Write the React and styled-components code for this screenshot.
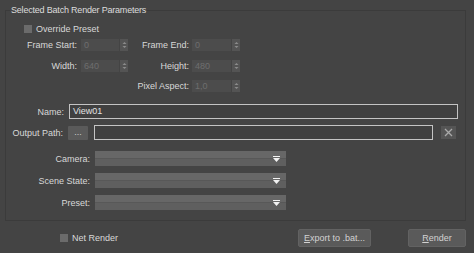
import React from 'react';
import styled, { createGlobalStyle } from 'styled-components';

const GlobalStyle = createGlobalStyle`
  html, body {
    margin: 0;
    padding: 0;
    background: #444444;
  }
  body {
    font-family: "Liberation Sans", Arial, sans-serif;
    font-size: 9px;
    color: #d8d8d8;
  }
`;

const Window = styled.div`
  width: 474px;
  height: 253px;
  box-sizing: border-box;
  padding-top: 4px;
  background: #444444;
  overflow: hidden;
`;

const Group = styled.fieldset`
  margin: 0 8px 0 5px;
  padding: 0 0 10px;
  min-width: 0;
  border: 1px solid #3b3b3b;
`;

const Legend = styled.legend`
  margin-left: 4px;
  padding: 0 1px;
  height: 12px;
  line-height: 12px;
  letter-spacing: -0.2px;
  color: #dcdcdc;
`;

const Body = styled.div`
  display: flex;
  flex-direction: column;
  padding-top: 7px;
`;

const CheckRow = styled.div`
  display: flex;
  align-items: center;
  gap: 4px;
  height: 12px;
  padding-left: ${p => p.$indent}px;
`;

const Box = styled.span`
  width: 8px;
  height: 8px;
  background: #6b6b6b;
`;

const SpinGrid = styled.div`
  display: grid;
  grid-template-columns: 75px 47px 64px 48px;
  grid-auto-rows: 12px;
  row-gap: 8.5px;
  margin-top: 4px;
  align-items: center;
`;

const SpinLabel = styled.span`
  grid-column: ${p => p.$col};
  text-align: right;
  padding-right: ${p => p.$pad}px;
`;

const Spinner = styled.div`
  display: flex;
  gap: 1px;
  height: 12px;
`;

const SpinField = styled.span`
  flex: 1;
  background: #4c4c4c;
  color: #6e6e6e;
  padding-left: 3px;
  line-height: 12px;
`;

const SpinButtons = styled.span`
  width: 8px;
  background: #545454;
  display: flex;
  align-items: center;
  justify-content: center;
`;

const Row = styled.div`
  display: flex;
  align-items: center;
  height: 15px;
  margin-top: ${p => p.$top}px;
`;

const Label = styled.span`
  width: ${p => p.$w}px;
  text-align: right;
  margin-right: 5px;
  flex-shrink: 0;
`;

const TextInput = styled.div`
  flex: 1;
  height: 15px;
  box-sizing: border-box;
  border: 1px solid #c4c4c4;
  background: #404040;
  color: #e2e2e2;
  padding-left: 3px;
  line-height: 13px;
  margin-right: ${p => p.$right}px;
`;

const SmallButton = styled.div`
  width: 20px;
  height: 14px;
  margin-right: 6px;
  background: #5a5a5a;
  border-radius: 1px;
  color: #d0d0d0;
  text-align: center;
  line-height: 12px;
`;

const ClearButton = styled.div`
  width: 15px;
  height: 13px;
  margin: 0 9px 0 8px;
  background: #555555;
  display: flex;
  align-items: center;
  justify-content: center;
`;

const Combo = styled.div`
  position: relative;
  width: 191px;
  height: 15px;
  background: linear-gradient(#676767 0, #676767 7px, #585858 7px, #585858 8px, #5f5f5f 8px);
  display: flex;
  align-items: center;
  justify-content: flex-end;
  padding-right: 6px;
  box-sizing: border-box;
`;

const BottomBar = styled.div`
  display: flex;
  align-items: center;
  margin-top: 8px;
  padding: 0 8px 0 60px;
  height: 18px;
`;

const Button = styled.div`
  width: ${p => p.$w}px;
  height: 18px;
  box-sizing: border-box;
  background: #5a5a5a;
  border: 1px solid #626262;
  border-radius: 2px;
  color: #d2d2d2;
  text-align: center;
  line-height: 16px;
  margin-left: ${p => p.$left};
`;

const U = styled.span`
  text-decoration: underline;
`;

function SpinArrows() {
  return (
    <svg width="5" height="8" viewBox="0 0 5 8">
      <polygon points="0.5,3 4.5,3 2.5,1" fill="#8c8c8c" />
      <polygon points="0.5,5 4.5,5 2.5,7" fill="#8c8c8c" />
    </svg>
  );
}

function Spin({ value }) {
  return (
    <Spinner>
      <SpinField>{value}</SpinField>
      <SpinButtons><SpinArrows /></SpinButtons>
    </Spinner>
  );
}

function ComboBox() {
  return (
    <Combo>
      <svg width="7" height="6" viewBox="0 0 7 6">
        <rect x="0" y="0" width="7" height="1" fill="#f2f2f2" />
        <polygon points="0,2 7,2 3.5,6" fill="#f2f2f2" />
      </svg>
    </Combo>
  );
}

export default function App() {
  return (
    <Window>
      <GlobalStyle />
      <Group>
        <Legend>Selected Batch Render Parameters</Legend>
        <Body>
          <CheckRow $indent={18}>
            <Box />
            <span>Override Preset</span>
          </CheckRow>
          <SpinGrid>
            <SpinLabel $col={1} $pad={4}>Frame Start:</SpinLabel>
            <Spin value="0" />
            <SpinLabel $col={3} $pad={3}>Frame End:</SpinLabel>
            <Spin value="0" />
            <SpinLabel $col={1} $pad={4}>Width:</SpinLabel>
            <Spin value="640" />
            <SpinLabel $col={3} $pad={3}>Height:</SpinLabel>
            <Spin value="480" />
            <SpinLabel $col={3} $pad={3}>Pixel Aspect:</SpinLabel>
            <Spin value="1,0" />
          </SpinGrid>
          <Row $top={12}>
            <Label $w={58}>Name:</Label>
            <TextInput $right={7}>View01</TextInput>
          </Row>
          <Row $top={6}>
            <Label $w={57}>Output Path:</Label>
            <SmallButton>...</SmallButton>
            <TextInput $right={0} />
            <ClearButton>
              <svg width="9" height="9" viewBox="0 0 9 9">
                <path d="M1 1 L8 8 M8 1 L1 8" stroke="#aaaaaa" strokeWidth="1.3" />
              </svg>
            </ClearButton>
          </Row>
          <Row $top={11}>
            <Label $w={84}>Camera:</Label>
            <ComboBox />
          </Row>
          <Row $top={7}>
            <Label $w={84}>Scene State:</Label>
            <ComboBox />
          </Row>
          <Row $top={7}>
            <Label $w={84}>Preset:</Label>
            <ComboBox />
          </Row>
        </Body>
      </Group>
      <BottomBar>
        <CheckRow $indent={0}>
          <Box />
          <span>Net Render</span>
        </CheckRow>
        <Button $w={73} $left="auto"><U>E</U>xport to .bat...</Button>
        <Button $w={58} $left="37px"><U>R</U>ender</Button>
      </BottomBar>
    </Window>
  );
}
